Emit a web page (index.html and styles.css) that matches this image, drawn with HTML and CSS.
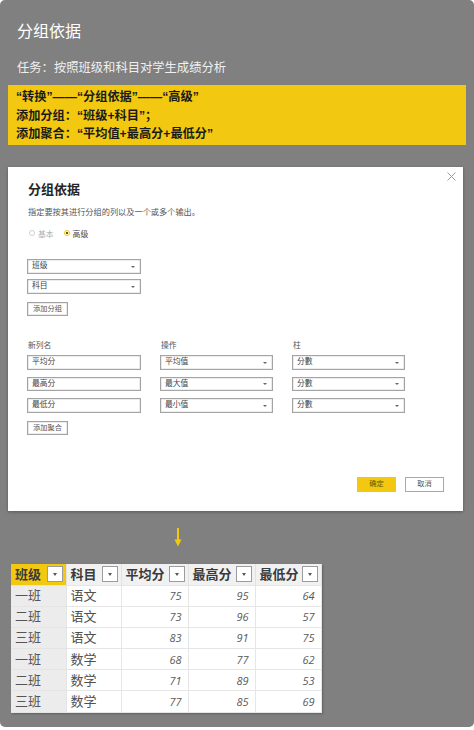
FILE: index.html
```html
<!DOCTYPE html>
<html lang="zh">
<head>
<meta charset="utf-8">
<title>分组依据</title>
<link rel="stylesheet" href="styles.css">
</head>
<body>
<div class="panel">
  <h1 class="title">分组依据</h1>
  <p class="task">任务：按照班级和科目对学生成绩分析</p>
  <div class="note">
    <div>“转换”——“分组依据”——“高级”</div>
    <div>添加分组：“班级+科目”；</div>
    <div>添加聚合：“平均值+最高分+最低分”</div>
  </div>

  <div class="dialog">
    <svg class="close" width="9" height="9" viewBox="0 0 9 9"><path d="M0.5 0.5L8.5 8.5M8.5 0.5L0.5 8.5" stroke="#9a9a9a" stroke-width="1" fill="none"/></svg>
    <h2 class="dlg-title">分组依据</h2>
    <p class="desc">指定要按其进行分组的列以及一个或多个输出。</p>
    <div class="radios">
      <span class="radio"></span><span class="radio-label off">基本</span>
      <span class="radio on"></span><span class="radio-label">高级</span>
    </div>

    <div class="groups">
      <div class="field select">班级<span class="caret"></span></div>
      <div class="field select">科目<span class="caret"></span></div>
      <div class="btn">添加分组</div>
    </div>

    <div class="aggs">
      <div class="agg-row labels">
        <span>新列名</span><span>操作</span><span>柱</span>
      </div>
      <div class="agg-row">
        <div class="field">平均分</div>
        <div class="field select">平均值<span class="caret"></span></div>
        <div class="field select">分數<span class="caret"></span></div>
      </div>
      <div class="agg-row">
        <div class="field">最高分</div>
        <div class="field select">最大值<span class="caret"></span></div>
        <div class="field select">分數<span class="caret"></span></div>
      </div>
      <div class="agg-row">
        <div class="field">最低分</div>
        <div class="field select">最小值<span class="caret"></span></div>
        <div class="field select">分數<span class="caret"></span></div>
      </div>
      <div class="btn">添加聚合</div>
    </div>

    <div class="footer">
      <div class="fbtn primary">确定</div>
      <div class="fbtn">取消</div>
    </div>
  </div>

  <div class="arrow">
    <svg width="8" height="19" viewBox="0 0 8 19"><path d="M4 0V13" stroke="#f2c811" stroke-width="2"/><path d="M0.5 11.5L4 18.5L7.5 11.5Z" fill="#f2c811"/></svg>
  </div>

  <table class="result">
    <thead>
      <tr>
        <th class="key"><span>班级</span><i class="dd"></i></th>
        <th><span>科目</span><i class="dd"></i></th>
        <th><span>平均分</span><i class="dd"></i></th>
        <th><span>最高分</span><i class="dd"></i></th>
        <th><span>最低分</span><i class="dd"></i></th>
      </tr>
    </thead>
    <tbody>
      <tr><td class="rh">一班</td><td>语文</td><td class="n">75</td><td class="n">95</td><td class="n">64</td></tr>
      <tr><td class="rh">二班</td><td>语文</td><td class="n">73</td><td class="n">96</td><td class="n">57</td></tr>
      <tr><td class="rh">三班</td><td>语文</td><td class="n">83</td><td class="n">91</td><td class="n">75</td></tr>
      <tr><td class="rh">一班</td><td>数学</td><td class="n">68</td><td class="n">77</td><td class="n">62</td></tr>
      <tr><td class="rh">二班</td><td>数学</td><td class="n">71</td><td class="n">89</td><td class="n">53</td></tr>
      <tr><td class="rh">三班</td><td>数学</td><td class="n">77</td><td class="n">85</td><td class="n">69</td></tr>
    </tbody>
  </table>
</div>
</body>
</html>
```

FILE: styles.css
```css
html, body {
  margin: 0;
  padding: 0;
  background: #ffffff;
}
body {
  font-family: "Liberation Sans", "Noto Sans CJK SC", sans-serif;
}
.panel {
  width: 474px;
  height: 727px;
  box-sizing: border-box;
  background: #808080;
  border-radius: 5px;
  padding: 0 8px 0 8px;
  overflow: hidden;
}
.title {
  margin: 22px 0 0 9px;
  font-size: 16px;
  line-height: 20px;
  font-weight: normal;
  color: #ffffff;
}
.task {
  margin: 18px 0 0 9px;
  font-size: 12.3px;
  line-height: 16px;
  color: #f0f0f0;
}
.note {
  margin-top: 9px;
  width: 458px;
  box-sizing: border-box;
  background: #f2c811;
  padding: 3px 8px 1px 8px;
  font-size: 12.2px;
  line-height: 18.5px;
  font-weight: bold;
  color: #1a1a1a;
}
.dialog {
  position: relative;
  margin-top: 22.5px;
  width: 455px;
  box-sizing: border-box;
  background: #ffffff;
  padding: 15px 19px 19px 19px;
  box-shadow: 0 1px 3px rgba(0,0,0,0.3);
}
.close {
  position: absolute;
  right: 7px;
  top: 5px;
}
.dlg-title {
  margin: 0 0 0 1px;
  font-size: 13px;
  line-height: 16px;
  font-weight: bold;
  color: #252525;
}
.desc {
  margin: 9px 0 0 1px;
  font-size: 8.2px;
  line-height: 12px;
  color: #555555;
}
.radios {
  margin-top: 8px;
  margin-left: 2px;
  display: flex;
  align-items: center;
  height: 12px;
  font-size: 7.8px;
  color: #444444;
}
.radio {
  width: 4px;
  height: 4px;
  border: 1px solid #cfcfcf;
  border-radius: 50%;
  margin-right: 3px;
  box-sizing: content-box;
}
.radio.on {
  border-color: #f2c811;
  background: radial-gradient(circle, #6b5a00 0 1.2px, #ffffff 1.6px);
  margin-left: 10px;
}
.radio-label.off {
  color: #b0b0b0;
}
.groups {
  margin-top: 20px;
  display: flex;
  flex-direction: column;
  align-items: flex-start;
  gap: 5.5px;
}
.groups .btn {
  margin-top: 2.5px;
}
.field {
  position: relative;
  width: 114px;
  height: 14.5px;
  box-sizing: border-box;
  border: 1px solid #a4a4a4;
  box-shadow: inset 0 0 0 0.6px #dcdcdc;
  padding-left: 4px;
  font-size: 7.8px;
  line-height: 12.5px;
  color: #444444;
  background: #ffffff;
}
.caret {
  position: absolute;
  right: 5px;
  top: 5.5px;
  width: 0;
  height: 0;
  border-left: 2px solid transparent;
  border-right: 2px solid transparent;
  border-top: 2px solid #666666;
}
.btn {
  height: 14.5px;
  width: 41px;
  box-sizing: border-box;
  border: 1px solid #a3a3a3;
  box-shadow: inset 0 0 0 0.6px #dcdcdc;
  font-size: 7.2px;
  line-height: 12.5px;
  text-align: center;
  color: #555555;
  background: #ffffff;
}
.aggs {
  margin-top: 25px;
  display: flex;
  flex-direction: column;
  align-items: flex-start;
  gap: 7px;
}
.agg-row {
  display: grid;
  grid-template-columns: 114px 113px 113px;
  column-gap: 19px;
}
.agg-row.labels {
  font-size: 7.8px;
  line-height: 10px;
  color: #555555;
  margin-bottom: -3px;
}
.agg-row.labels span {
  padding-left: 1px;
}
.agg-row .field {
  width: auto;
}
.aggs .btn {
  margin-top: 1px;
}
.footer {
  margin-top: 42px;
  display: flex;
  justify-content: flex-end;
  gap: 9px;
  padding-right: 0;
}
.fbtn {
  width: 39px;
  height: 14.5px;
  box-sizing: border-box;
  border: 1px solid #a8a8a8;
  font-size: 7.2px;
  line-height: 12.5px;
  text-align: center;
  color: #555555;
  background: #ffffff;
}
.fbtn.primary {
  background: #f2c811;
  border-color: #f2c811;
  color: #6b5400;
}
.arrow {
  height: 53px;
  display: flex;
  align-items: center;
  padding-left: 166px;
  padding-top: 0;
}
.arrow svg {
  display: block;
}
.result {
  margin-left: 3px;
  border-collapse: collapse;
  background: #ffffff;
  box-shadow: 1px 1px 2px rgba(0,0,0,0.25);
  table-layout: fixed;
}
.result th, .result td {
  padding: 0;
  box-sizing: border-box;
}
.result th {
  height: 21px;
  background: #f1f1f1;
  text-align: left;
  font-size: 13px;
  font-weight: bold;
  color: #3a3a3a;
  position: relative;
  border-right: 1px solid #e2e2e2;
  padding-left: 4px;
}
.result th.key {
  background: #f2c811;
}
.result th span {
  display: inline-block;
  line-height: 21px;
}
.dd {
  position: absolute;
  right: 3px;
  top: 2.5px;
  width: 16px;
  height: 16px;
  box-sizing: border-box;
  border: 1px solid #9c9c9c;
  background: #ffffff;
}
.dd::after {
  content: "";
  position: absolute;
  left: 5px;
  top: 6px;
  border-left: 2.5px solid transparent;
  border-right: 2.5px solid transparent;
  border-top: 3px solid #555555;
}
.result th:nth-child(1), .result td:nth-child(1) { width: 55px; }
.result th:nth-child(2), .result td:nth-child(2) { width: 55px; }
.result th:nth-child(3), .result td:nth-child(3) { width: 67px; }
.result th:nth-child(4), .result td:nth-child(4) { width: 67px; }
.result th:nth-child(5), .result td:nth-child(5) { width: 66px; }
.result td {
  height: 21.2px;
  border: 1px solid #e6e6e6;
  border-left: 0;
  font-size: 13px;
  color: #505050;
  padding-left: 4px;
  line-height: 19px;
}
.result td.rh {
  background: #ececec;
  border-color: #e4e4e4;
  color: #555555;
}
.result td.n {
  text-align: right;
  padding-right: 6px;
  font-family: "Open Sans", "DejaVu Sans", sans-serif;
  font-style: italic;
  font-size: 11px;
  color: #5a5a5a;
}
```
